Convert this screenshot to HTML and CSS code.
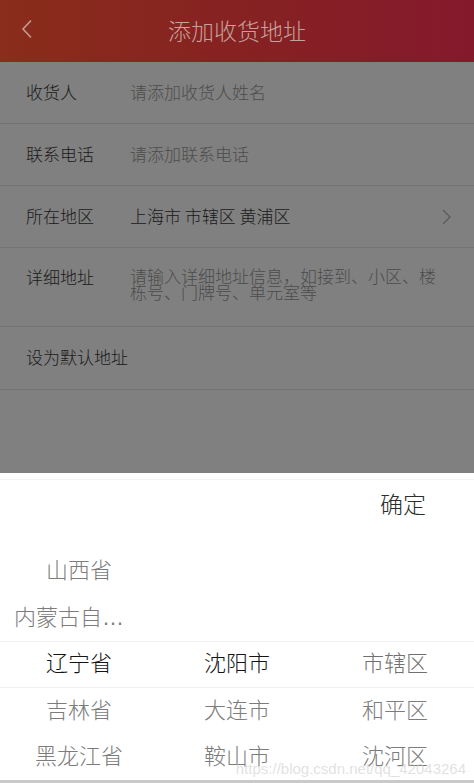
FILE: index.html
```html
<!DOCTYPE html>
<html lang="zh-CN">
<head>
<meta charset="utf-8">
<title>添加收货地址</title>
<link rel="stylesheet" href="styles.css">
</head>
<body>
<div class="page">
  <header class="nav">
    <svg class="nav-back" width="12" height="20" viewBox="0 0 12 20">
      <path d="M10 1.5 L2 10 L10 18.5" fill="none" stroke="currentColor" stroke-width="1.6"/>
    </svg>
    <h1 class="nav-title">添加收货地址</h1>
  </header>

  <div class="backdrop">
    <div class="field">
      <span class="field-label">收货人</span>
      <span class="field-value placeholder">请添加收货人姓名</span>
    </div>
    <div class="field">
      <span class="field-label">联系电话</span>
      <span class="field-value placeholder">请添加联系电话</span>
    </div>
    <div class="field">
      <span class="field-label">所在地区</span>
      <span class="field-value">上海市 市辖区 黄浦区</span>
      <svg class="field-arrow" width="9" height="16" viewBox="0 0 9 16">
        <path d="M1 1 L8 8 L1 15" fill="none" stroke="currentColor" stroke-width="1.3"/>
      </svg>
    </div>
    <div class="field field-area">
      <span class="field-label">详细地址</span>
      <span class="field-value placeholder area-text">请输入详细地址信息，如接到、小区、楼栋号、门牌号、单元室等</span>
    </div>
    <div class="field field-default">
      <span class="field-label wide">设为默认地址</span>
    </div>
  </div>

  <section class="sheet">
    <div class="sheet-bar">
      <span class="sheet-confirm">确定</span>
    </div>
    <div class="picker">
      <div class="picker-col">
        <div class="opt">山西省</div>
        <div class="opt">内蒙古自治区</div>
        <div class="opt current">辽宁省</div>
        <div class="opt">吉林省</div>
        <div class="opt">黑龙江省</div>
      </div>
      <div class="picker-col">
        <div class="opt"></div>
        <div class="opt"></div>
        <div class="opt current">沈阳市</div>
        <div class="opt">大连市</div>
        <div class="opt">鞍山市</div>
      </div>
      <div class="picker-col">
        <div class="opt"></div>
        <div class="opt"></div>
        <div class="opt current soft">市辖区</div>
        <div class="opt">和平区</div>
        <div class="opt">沈河区</div>
      </div>
      <div class="picker-band"></div>
    </div>
    <div class="sheet-foot"></div>
    <span class="stamp">https://blog.csdn.net/qq_42043264</span>
  </section>
</div>
</body>
</html>
```

FILE: styles.css
```css
* {
  box-sizing: border-box;
  margin: 0;
  padding: 0;
}

html, body {
  height: 100%;
}

body {
  font-family: "Noto Sans CJK SC", "Microsoft YaHei", sans-serif;
  background: #808080;
}

.page {
  display: flex;
  flex-direction: column;
  height: 100vh;
  overflow: hidden;
}

/* top navigation bar, dimmed by the open sheet */
.nav {
  position: relative;
  height: 62px;
  flex: 0 0 62px;
  display: flex;
  align-items: center;
  justify-content: center;
  background: linear-gradient(90deg, #8a2d1b 0%, #862321 45%, #84192c 100%);
}

.nav-back {
  position: absolute;
  left: 21px;
  top: 19px;
  color: #c49a93;
}

.nav-title {
  font-size: 23px;
  font-weight: 300;
  color: #c7a19d;
  letter-spacing: 0;
  line-height: 1;
  margin-top: -2px;
}

/* form rows behind the mask */
.backdrop {
  flex: 1;
  background: #808080;
}

.field {
  display: flex;
  align-items: center;
  height: 62px;
  padding: 0 26px;
  border-bottom: 1px solid #747474;
  font-size: 17px;
  font-weight: 300;
  line-height: 24px;
  color: #1a1a1a;
}

.field-label {
  flex: 0 0 104px;
  margin-top: -2px;
}

.field-label.wide {
  flex: 0 0 auto;
}

.field-value {
  flex: 1;
  margin-top: -2px;
  color: #1a1a1a;
}

.placeholder {
  color: #4c4c4c;
}

.field-arrow {
  flex: 0 0 auto;
  margin-right: -3px;
  color: #5a5a5a;
}

.field-area {
  height: 79px;
  align-items: flex-start;
  padding-top: 19px;
  padding-right: 34px;
}

.area-text {
  line-height: 16px;
  padding-top: 1px;
  margin-top: 0;
}

.field-default {
  height: 63px;
}

/* bottom region picker */
.sheet {
  position: relative;
  flex: 0 0 310px;
  background: #fff;
  display: flex;
  flex-direction: column;
}

.sheet-bar {
  height: 75px;
  flex: 0 0 75px;
  display: flex;
  justify-content: flex-end;
  padding: 10px 48px 0 0;
  border-top: 6px solid #fff;
  box-shadow: inset 0 1px 0 #f4f4f4;
}

.sheet-confirm {
  font-size: 23px;
  font-weight: 300;
  line-height: 28px;
  height: 28px;
  color: #2a2f2b;
}

.picker {
  position: relative;
  display: grid;
  grid-template-columns: repeat(3, 1fr);
  height: 232px;
  flex: 0 0 232px;
}

.picker-col {
  display: flex;
  flex-direction: column;
  min-width: 0;
}

/* Liberation Sans comes first so the ellipsis sits on the baseline */
.opt {
  height: 46.5px;
  line-height: 46.5px;
  font-family: "Liberation Sans", "Noto Sans CJK SC", sans-serif;
  font-size: 22px;
  font-weight: 300;
  text-align: center;
  color: #7c7c7c;
  padding: 0 14px;
  white-space: nowrap;
  overflow: hidden;
  text-overflow: ellipsis;
}

.opt.current {
  color: #141414;
}

.opt.current.soft {
  color: #707070;
}

.picker-band {
  position: absolute;
  left: 0;
  right: 0;
  top: 93px;
  height: 47px;
  border-top: 1px solid #efefef;
  border-bottom: 1px solid #efefef;
  pointer-events: none;
}

.sheet-foot {
  flex: 1;
  background: #c9c9c9;
}

.stamp {
  position: absolute;
  right: 8px;
  bottom: 6px;
  font-family: "Liberation Sans", Arial, sans-serif;
  font-size: 15px;
  color: rgba(200, 200, 200, 0.55);
  pointer-events: none;
}
```
